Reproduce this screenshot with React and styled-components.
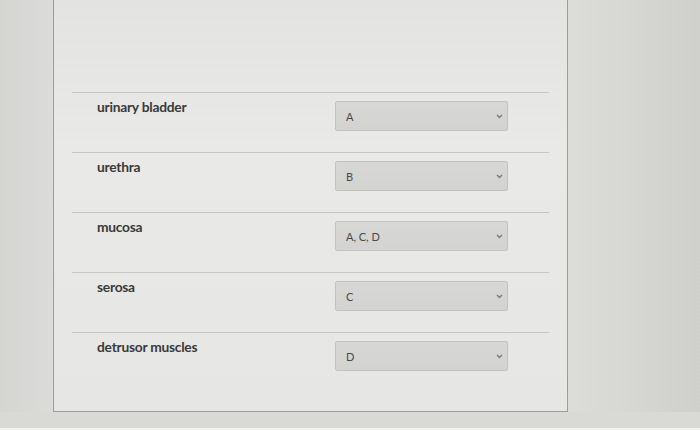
import React from 'react'
import styled, { createGlobalStyle } from 'styled-components'

const GlobalStyle = createGlobalStyle`
  html, body {
    margin: 0;
    padding: 0;
  }
  body {
    width: 700px;
    height: 430px;
    overflow: hidden;
    background: linear-gradient(90deg, #d4d4d1 0%, #dcdcda 8%, #dcdcd9 82%, #cfcfcc 100%);
    font-family: Lato, "Open Sans", sans-serif;
  }
`

const items = [
  { label: 'urinary bladder', value: 'A' },
  { label: 'urethra', value: 'B' },
  { label: 'mucosa', value: 'A, C, D' },
  { label: 'serosa', value: 'C' },
  { label: 'detrusor muscles', value: 'D' },
]

const Chevron = () => (
  <svg width="7" height="5" viewBox="0 0 7 5">
    <path d="M1 1l2.5 2.5L6 1" fill="none" stroke="#7a7a78" strokeWidth="1.4" />
  </svg>
)

const App = () => (
  <>
    <GlobalStyle />
    <Page>
      <Panel>
        <List>
          {items.map((item) => (
            <Row key={item.label}>
              <Label>{item.label}</Label>
              <Select>
                <Value>{item.value}</Value>
                <Chevron />
              </Select>
            </Row>
          ))}
        </List>
      </Panel>
      <Floor />
      <Edge />
    </Page>
  </>
)

export default App

const Page = styled.div`
  display: flex;
  flex-direction: column;
  height: 430px;
`

const Panel = styled.div`
  margin-left: 53px;
  width: 515px;
  height: 412px;
  box-sizing: border-box;
  border: 1px solid #9c9c9a;
  border-top: none;
  background: linear-gradient(180deg, #e3e3e1 0%, #e9e9e7 35%, #e6e6e4 100%);
  padding: 92px 18px 0 18px;
`

const List = styled.div`
  display: flex;
  flex-direction: column;
`

const Row = styled.div`
  display: flex;
  align-items: flex-start;
  height: 60px;
  box-sizing: border-box;
  border-top: 1px solid #c6c6c4;
`

const Label = styled.div`
  width: 238px;
  padding: 5px 0 0 25px;
  font-size: 13.8px;
  font-weight: 700;
  color: #3a3a3a;
  letter-spacing: -0.25px;
`

const Select = styled.div`
  margin-top: 8px;
  width: 173px;
  height: 30px;
  box-sizing: border-box;
  display: flex;
  align-items: center;
  justify-content: space-between;
  padding: 0 4px 0 10px;
  background: linear-gradient(180deg, #d7d7d5 0%, #d3d3d1 100%);
  border: 1px solid #c2c2c0;
  border-radius: 2px;
`

const Value = styled.span`
  font-size: 11px;
  font-weight: 400;
  color: #4a4a4a;
`

const Floor = styled.div`
  flex: 1;
  background: #d9d9d6;
`

const Edge = styled.div`
  height: 2px;
  background: #f2f2f0;
`
